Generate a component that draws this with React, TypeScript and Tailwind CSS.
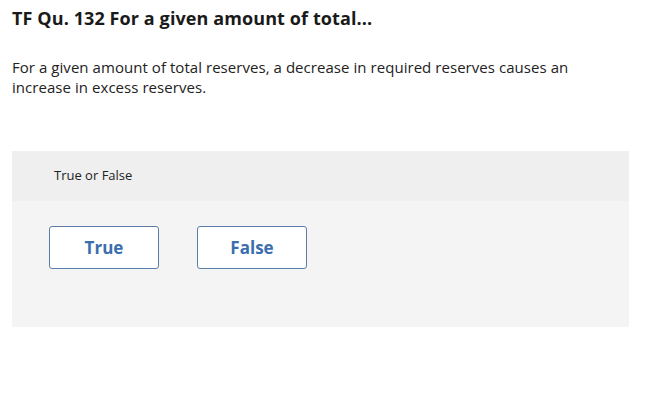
export default function App() {
  return (
    <div className="w-[661px] h-[403px] bg-white font-['Open_Sans',sans-serif] text-[#1a1a1a]">
      <div className="px-3 pt-[4px]">
        <h1 className="text-[18px] leading-[28px] font-bold tracking-[0.1px]">TF Qu. 132 For a given amount of total...</h1>
        <p className="mt-[25px] text-[15px] leading-[20px] text-[#222] tracking-[0.05px] pr-[60px]">
          For a given amount of total reserves, a decrease in required reserves causes an increase in excess reserves.
        </p>
      </div>
      <div className="mx-3 mt-[54px] w-[617px] bg-[#f4f4f5] rounded-[2px]">
        <div className="h-[50px] bg-[#efefef] flex items-center px-[42px] text-[13px] text-[#222]">
          True or False
        </div>
        <div className="flex gap-[38px] px-[37px] pt-[25px] pb-[58px]">
          <button className="w-[110px] h-[43px] bg-white border border-[#5b7fa8] rounded-[3px] text-[#3a6eae] font-bold text-[17px]">
            True
          </button>
          <button className="w-[110px] h-[43px] bg-white border border-[#5b7fa8] rounded-[3px] text-[#3a6eae] font-bold text-[17px]">
            False
          </button>
        </div>
      </div>
    </div>
  );
}
